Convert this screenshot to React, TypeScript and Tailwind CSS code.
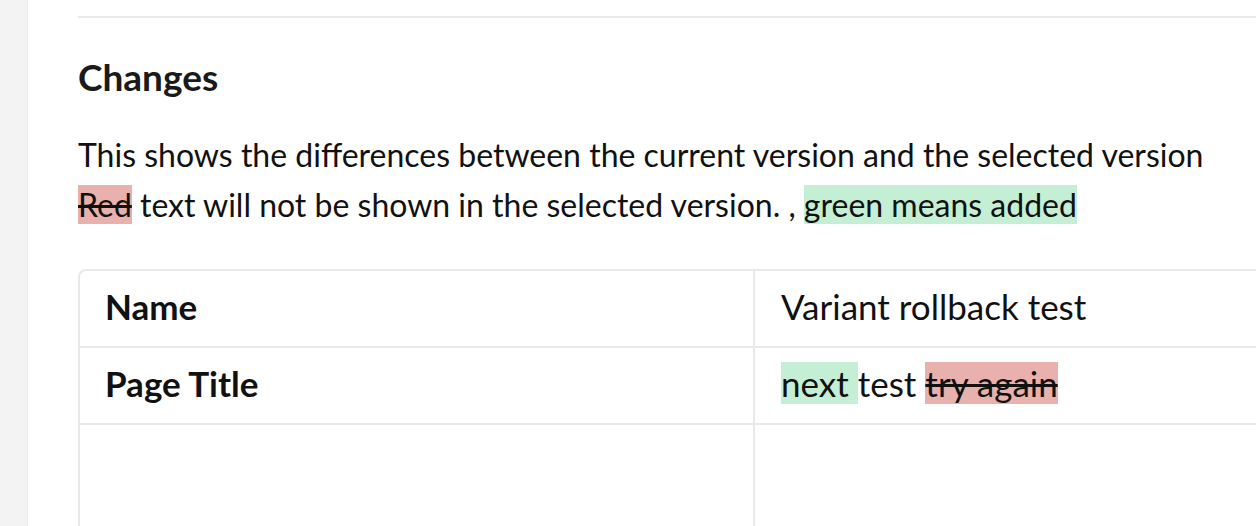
import React from 'react';

type Row = { label: string; value: React.ReactNode };

const rows: Row[] = [
  { label: 'Name', value: 'Variant rollback test' },
  {
    label: 'Page Title',
    value: (
      <>
        <span className="bg-[#c4efd4]">next </span>test{' '}
        <span className="bg-[#e9b1ae] line-through">try again</span>
      </>
    ),
  },
  { label: '', value: '' },
];

export default function App() {
  return (
    <div
      className="flex h-[526px] w-[1256px] overflow-hidden bg-white text-[#111]"
      style={{ fontFamily: 'Lato, "Open Sans", sans-serif' }}
    >
      {/* Sidebar strip */}
      <div className="w-[28px] shrink-0 border-r border-[#e8e8e8] bg-[#f3f3f3]" />

      {/* Main content */}
      <div className="w-[1500px] shrink-0 pl-[50px] pt-[16px]">
        <div className="h-[2px] bg-[#e9e9e9]" />

        <h2 className="mt-[37px] text-[37px] font-bold leading-[44px] text-[#1a1a1a]">Changes</h2>

        <p className="mt-[31px] text-[32px] leading-[50px]">
          This shows the differences between the current version and the selected version
          <br />
          <span className="bg-[#e9b1ae] line-through">Red</span> text will not be shown in the selected
          version. , <span className="bg-[#c4efd4]">green means added</span>
        </p>

        {/* Diff table */}
        <div className="mt-[39px] overflow-hidden rounded-tl-[8px] border-l-2 border-t-2 border-[#e8e8e8]">
          {rows.map((row, i) => (
            <div key={i} className="flex h-[77px] border-b-2 border-[#e8e8e8] last:h-[160px] last:border-b-0">
              <div className="flex w-[675px] shrink-0 items-center border-r-2 border-[#e8e8e8] px-[25px] pb-[4px] text-[35px] font-bold">
                {row.label}
              </div>
              <div className="flex flex-1 items-center px-[26px] pb-[4px] text-[35px]">
                <span>{row.value}</span>
              </div>
            </div>
          ))}
        </div>
      </div>
    </div>
  );
}
